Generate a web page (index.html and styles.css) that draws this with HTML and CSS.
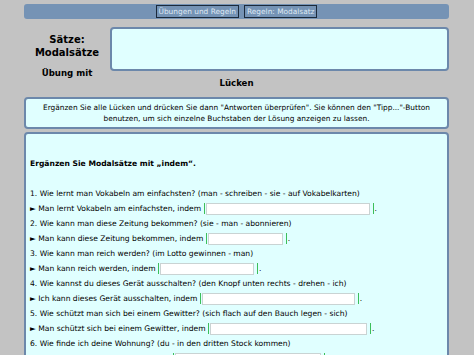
FILE: index.html
```html
<!DOCTYPE html>
<html lang="de">
<head>
<meta charset="utf-8">
<title>Sätze: Modalsätze</title>
<link rel="stylesheet" href="styles.css">
</head>
<body>
<div class="page">
  <div class="nav">
    <a class="navbtn">Übungen und Regeln</a>
    <a class="navbtn">Regeln: Modalsatz</a>
  </div>
  <div class="header">
    <div class="titlecol">
      <h1 class="title">Sätze:<br>Modalsätze</h1>
      <h2 class="subtitle">Übung mit</h2>
    </div>
    <div class="headbox"></div>
  </div>
  <div class="subline">Lücken</div>
  <div class="instr">Ergänzen Sie alle Lücken und drücken Sie dann "Antworten überprüfen". Sie können den "Tipp..."-Button<br>benutzen, um sich einzelne Buchstaben der Lösung anzeigen zu lassen.</div>
  <div class="main">
    <div class="task">Ergänzen Sie Modalsätze mit „indem“.</div>
    <div class="items">
      <div class="q">1. Wie lernt man Vokabeln am einfachsten? (man - schreiben - sie - auf Vokabelkarten)</div>
      <div class="a">► Man lernt Vokabeln am einfachsten, indem <span class="gap"></span><input class="inp" style="width:164px"><span class="gap gap-r"></span>.</div>
      <div class="q">2. Wie kann man diese Zeitung bekommen? (sie - man - abonnieren)</div>
      <div class="a">► Man kann diese Zeitung bekommen, indem <span class="gap"></span><input class="inp" style="width:75px"><span class="gap gap-r"></span>.</div>
      <div class="q">3. Wie kann man reich werden? (im Lotto gewinnen - man)</div>
      <div class="a">► Man kann reich werden, indem <span class="gap"></span><input class="inp" style="width:94px"><span class="gap gap-r"></span>.</div>
      <div class="q">4. Wie kannst du dieses Gerät ausschalten? (den Knopf unten rechts - drehen - ich)</div>
      <div class="a">► Ich kann dieses Gerät ausschalten, indem <span class="gap"></span><input class="inp" style="width:153px"><span class="gap gap-r"></span>.</div>
      <div class="q">5. Wie schützt man sich bei einem Gewitter? (sich flach auf den Bauch legen - sich)</div>
      <div class="a">► Man schützt sich bei einem Gewitter, indem <span class="gap"></span><input class="inp" style="width:157px"><span class="gap gap-r"></span>.</div>
      <div class="q">6. Wie finde ich deine Wohnung? (du - in den dritten Stock kommen)</div>
      <div class="a">► Du findest meine Wohnung, indem <span class="gap"></span><input class="inp" style="width:146px"><span class="gap gap-r"></span>.</div>
    </div>
  </div>
</div>
</body>
</html>
```
FILE: styles.css
```css
html, body {
  margin: 0;
  padding: 0;
  background: #c3c3c3;
  height: 100%;
  overflow: hidden;
}
body {
  font-family: "DejaVu Sans", Verdana, sans-serif;
  font-size: 7.6px;
  color: #000;
}
.page {
  width: 425px;
  margin-left: 24px;
  padding-top: 4px;
}
.nav {
  height: 15px;
  background: #7593b5;
  border-radius: 3px;
  display: flex;
  justify-content: center;
  align-items: center;
  gap: 5px;
}
.navbtn {
  display: block;
  height: 11px;
  line-height: 11px;
  padding: 0 2px;
  border: 1px solid #1b2a3b;
  background: #7593b5;
  color: #dfe9f4;
  font-size: 7.4px;
}
.header {
  display: flex;
  margin-top: 8px;
}
.titlecol {
  width: 86px;
  text-align: center;
}
.title {
  margin: 6px 0 0;
  font-size: 10px;
  line-height: 13px;
  font-weight: bold;
}
.subtitle {
  margin: 9px 0 0;
  font-size: 8.6px;
  line-height: 10px;
  font-weight: bold;
}
.headbox {
  flex: 1;
  height: 40px;
  background: #e0ffff;
  border: 2px solid #6c88ab;
  border-radius: 4px;
}
.subline {
  text-align: center;
  font-size: 8.6px;
  line-height: 10px;
  font-weight: bold;
  margin-top: 0px;
}
.instr {
  margin-top: 9px;
  background: #e0ffff;
  border: 2px solid #6c88ab;
  border-radius: 4px;
  text-align: center;
  padding: 3px 4px 3px;
  line-height: 11px;
  font-size: 7.4px;
}
.main {
  margin-top: 3px;
  background: #e0ffff;
  border: 2px solid #6c88ab;
  border-radius: 4px;
  padding: 24px 4px 40px;
  min-height: 300px;
}
.task {
  font-weight: bold;
  line-height: 12px;
}
.items {
  margin-top: 16px;
}
.q, .a {
  height: 15px;
  line-height: 15px;
  white-space: nowrap;
}
.gap {
  display: inline-block;
  width: 1px;
  height: 11px;
  background: #3cbf5a;
  vertical-align: middle;
  margin-right: 1px;
}
.gap-r {
  margin-left: 3px;
  margin-right: 1px;
}
.inp {
  box-sizing: border-box;
  height: 12px;
  border: 1px solid #c9d3d3;
  background: #fff;
  padding: 0;
  margin: 0;
  vertical-align: middle;
}
```
